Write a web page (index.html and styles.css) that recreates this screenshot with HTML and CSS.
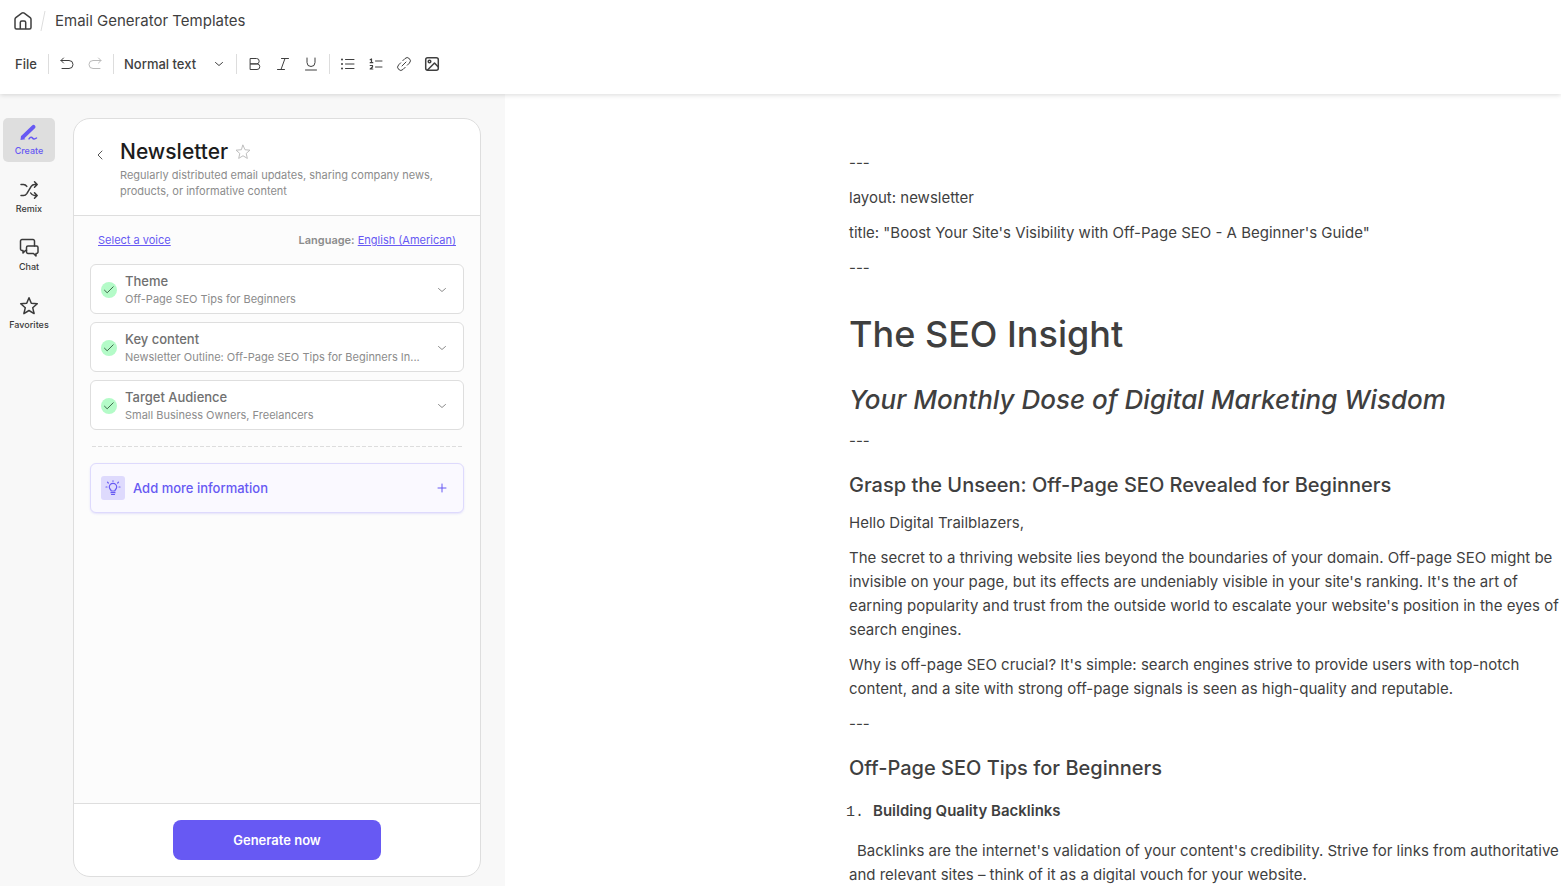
FILE: index.html
```html
<!DOCTYPE html>
<html lang="en">
<head>
    <meta charset="UTF-8">
    <meta name="viewport" content="width=device-width, initial-scale=1.0">
    <title>Email Generator Templates</title>
    <link rel="stylesheet" href="styles.css">
</head>
<body>
    <header class="topbar">
        <div class="breadcrumb">
            <a href="#" class="home" aria-label="Home">
                <svg width="20" height="20" viewBox="0 0 20 20"><path d="M2 8.200a2 2 0 0 1 .8-1.600L8.800 2.200a2 2 0 0 1 2.400 0l6 4.400a2 2 0 0 1 .8 1.600v8.300a1.500 1.500 0 0 1-1.500 1.500h-13A1.500 1.500 0 0 1 2 16.500zM7.300 18v-6.500a1.500 1.500 0 0 1 1.500-1.500h2.400a1.500 1.500 0 0 1 1.500 1.500V18"/></svg>
            </a>
            <svg class="slash" width="6" height="20" viewBox="0 0 6 20"><path d="M5 0 1 20"/></svg>
            <span class="doc-name">Email Generator Templates</span>
        </div>
        <div class="toolbar">
            <button type="button" class="file">File</button>
            <span class="divider"></span>
            <button type="button" class="tool" aria-label="Undo">
                <svg width="16" height="16" viewBox="0 0 16 16"><path d="M4.500 2 2 4.500 4.500 7M2 4.500h8a4 4 0 0 1 0 8H3"/></svg>
            </button>
            <button type="button" class="tool muted" aria-label="Redo">
                <svg width="16" height="16" viewBox="0 0 16 16"><path d="M11.500 2 14 4.500 11.500 7M14 4.500H6a4 4 0 0 0 0 8h7"/></svg>
            </button>
            <span class="divider"></span>
            <div class="style-picker">
                <select aria-label="Text style">
                    <option>Normal text</option>
                    <option>Heading 1</option>
                    <option>Heading 2</option>
                </select>
                <svg width="10" height="10" viewBox="0 0 10 10"><path d="m1.500 3.500 3.500 3 3.500-3"/></svg>
            </div>
            <span class="divider"></span>
            <button type="button" class="tool" aria-label="Bold">
                <svg width="16" height="16" viewBox="0 0 16 16"><path d="M3.500 2.500h6a2.700 2.700 0 0 1 0 5.400h-6zM3.500 7.900h6.500a2.800 2.800 0 0 1 0 5.600H3.500z"/></svg>
            </button>
            <button type="button" class="tool" aria-label="Italic">
                <svg width="16" height="16" viewBox="0 0 16 16"><path d="M6.500 2.500h7M2.500 13.500h7M10 2.500l-4 11"/></svg>
            </button>
            <button type="button" class="tool" aria-label="Underline">
                <svg width="16" height="16" viewBox="0 0 16 16"><path d="M4 2v4.500a4 4 0 0 0 8 0V2M2.500 14h11"/></svg>
            </button>
            <span class="divider"></span>
            <button type="button" class="tool" aria-label="Bulleted list">
                <svg width="16" height="16" viewBox="0 0 16 16"><path d="M5.500 3.500h8.500M5.500 8h8.500M5.500 12.500h8.500"/><path class="dots" d="M2 3.500h.01M2 8h.01M2 12.500h.01"/></svg>
            </button>
            <button type="button" class="tool" aria-label="Numbered list">
                <svg width="16" height="16" viewBox="0 0 16 16"><path d="M7.500 5h6.500M7.500 11h6.500"/><path class="digits" d="M2.200 3.700 3.500 3v3.700M2.200 6.700h2.600M2.200 9.500h2.300v1.500L2.200 13h2.600"/></svg>
            </button>
            <button type="button" class="tool" aria-label="Link">
                <svg width="16" height="16" viewBox="0 0 16 16"><path d="M6.800 4.700 8.900 2.600a3.150 3.150 0 0 1 4.500 4.500L11.300 9.200M9.200 11.300l-2.100 2.100a3.150 3.150 0 0 1-4.500-4.500L4.700 6.800M6 10l4-4"/></svg>
            </button>
            <button type="button" class="tool" aria-label="Image">
                <svg width="16" height="16" viewBox="0 0 16 16"><g class="bold"><rect x="1.700" y="1.700" width="12.600" height="12.600" rx="2"/><circle cx="5.500" cy="5.500" r="1.300"/><path d="m3.500 14 7-7 3.800 4"/></g></svg>
            </button>
        </div>
    </header>

    <div class="workspace">
        <nav class="rail">
            <a href="#" class="rail-item active">
                <svg width="20" height="20" viewBox="0 0 20 20"><path class="pen" d="m4.600 14.400 9.900-9.500"/><path class="nib" d="m1.500 18 .6-4.800 4.300 4z"/><path d="M10 16.800c1.500-2.200 2.800-1.800 3.500-.8s2 1.600 4 0"/></svg>
                <span>Create</span>
            </a>
            <a href="#" class="rail-item">
                <svg width="20" height="20" viewBox="0 0 20 20"><path d="M2 4.500h2.500c1.500 0 2.500.7 3.300 1.900M2 15.500h2.500c1.500 0 2.500-.7 3.300-1.900l4.400-7.200c.8-1.200 1.800-1.900 3.300-1.900H18M11.700 13c.9 1.600 2 2.500 3.800 2.500H18M15.500 1.700l2.700 2.800-2.700 2.800M15.500 12.700l2.700 2.800-2.700 2.800"/></svg>
                <span>Remix</span>
            </a>
            <a href="#" class="rail-item">
                <svg width="20" height="20" viewBox="0 0 20 20"><path d="M7.500 12.500H6.500L4 15v-2.500H3A1.500 1.500 0 0 1 1.500 11V3A1.500 1.500 0 0 1 3 1.500h11A1.500 1.500 0 0 1 15.500 3v5"/><path d="M9 8h8.500A1.500 1.500 0 0 1 19 9.500V14a1.500 1.500 0 0 1-1.500 1.500H17V18l-2.500-2.500H9A1.500 1.500 0 0 1 7.500 14V9.500A1.500 1.500 0 0 1 9 8z"/></svg>
                <span>Chat</span>
            </a>
            <a href="#" class="rail-item">
                <svg width="20" height="20" viewBox="0 0 20 20"><path d="m10 1.800 2.300 5.500 6 .5-4.600 3.900 1.400 5.900L10 14.500l-5.100 3.100 1.400-5.900-4.600-3.900 6-.5z"/></svg>
                <span>Favorites</span>
            </a>
        </nav>

        <aside class="panel">
            <div class="panel-head">
                <button type="button" class="back" aria-label="Back">
                    <svg width="10" height="10" viewBox="0 0 10 10"><path d="M7 1 3 5l4 4"/></svg>
                </button>
                <div>
                    <div class="title-row">
                        <h2>Newsletter</h2>
                        <button type="button" class="fav" aria-label="Add to favorites">
                            <svg width="16" height="16" viewBox="0 0 20 20"><path d="m10 1.500 2.500 5.700 6.200.5-4.700 4.100 1.400 6.200-5.400-3.300L4.600 18 6 11.800 1.300 7.700l6.200-.5z"/></svg>
                        </button>
                    </div>
                    <p>Regularly distributed email updates, sharing company news, products, or informative content</p>
                </div>
            </div>

            <div class="panel-body">
                <div class="options">
                    <a href="#">Select a voice</a>
                    <div><b>Language:</b> <a href="#">English (American)</a></div>
                </div>

                <button type="button" class="field">
                    <svg class="check" width="16" height="16" viewBox="0 0 16 16"><circle cx="8" cy="8" r="8"/><path d="m3.500 8.200 2.700 2.600 6-6"/></svg>
                    <span class="field-text"><span class="field-name">Theme</span><span class="field-value">Off-Page SEO Tips for Beginners</span></span>
                    <svg class="chevron" width="10" height="10" viewBox="0 0 10 10"><path d="m1.500 3.500 3.500 3 3.500-3"/></svg>
                </button>
                <button type="button" class="field">
                    <svg class="check" width="16" height="16" viewBox="0 0 16 16"><circle cx="8" cy="8" r="8"/><path d="m3.500 8.200 2.700 2.600 6-6"/></svg>
                    <span class="field-text"><span class="field-name">Key content</span><span class="field-value">Newsletter Outline: Off-Page SEO Tips for Beginners In...</span></span>
                    <svg class="chevron" width="10" height="10" viewBox="0 0 10 10"><path d="m1.500 3.500 3.500 3 3.500-3"/></svg>
                </button>
                <button type="button" class="field">
                    <svg class="check" width="16" height="16" viewBox="0 0 16 16"><circle cx="8" cy="8" r="8"/><path d="m3.500 8.200 2.700 2.600 6-6"/></svg>
                    <span class="field-text"><span class="field-name">Target Audience</span><span class="field-value">Small Business Owners, Freelancers</span></span>
                    <svg class="chevron" width="10" height="10" viewBox="0 0 10 10"><path d="m1.500 3.500 3.500 3 3.500-3"/></svg>
                </button>

                <svg class="dashes" height="1"><line x1="0" y1="0.500" x2="100%" y2="0.500"/></svg>

                <button type="button" class="field more">
                    <span class="bulb">
                        <svg width="16" height="16" viewBox="0 0 16 16"><path d="M6.200 11c0-1.300-1.900-1.900-1.900-4a3.700 3.700 0 0 1 7.400 0c0 2.100-1.900 2.700-1.900 4zM6 12.700h4M6.500 14.500h3M8 1.300V.8M3.300 3 2.500 2.200M12.700 3l.8-.8M2 7H1M14 7h1"/></svg>
                    </span>
                    <span class="field-text">Add more information</span>
                    <svg class="plus" width="10" height="10" viewBox="0 0 10 10"><path d="M5 1v8M1 5h8"/></svg>
                </button>
            </div>

            <div class="panel-foot">
                <button type="button" class="generate">Generate now</button>
            </div>
        </aside>

        <main class="editor">
            <article class="document">
                <p>---</p>
                <p>layout: newsletter</p>
                <p>title: "Boost Your Site's Visibility with Off-Page SEO - A Beginner's Guide"</p>
                <p>---</p>
                <h1>The SEO Insight</h1>
                <h2><em>Your Monthly Dose of Digital Marketing Wisdom</em></h2>
                <p>---</p>
                <h3>Grasp the Unseen: Off-Page SEO Revealed for Beginners</h3>
                <p>Hello Digital Trailblazers,</p>
                <p>The secret to a thriving website lies beyond the boundaries of your domain. Off-page SEO might be invisible on your page, but its effects are undeniably visible in your site's ranking. It's the art of earning popularity and trust from the outside world to escalate your website's position in the eyes of search engines.</p>
                <p>Why is off-page SEO crucial? It's simple: search engines strive to provide users with top-notch content, and a site with strong off-page signals is seen as high-quality and reputable.</p>
                <p>---</p>
                <h3>Off-Page SEO Tips for Beginners</h3>
                <ol>
                    <li>Building Quality Backlinks</li>
                </ol>
                <p class="indented">Backlinks are the internet's validation of your content's credibility. Strive for links from authoritative and relevant sites – think of it as a digital vouch for your website.</p>
            </article>
        </main>
    </div>
</body>
</html>
```

FILE: styles.css
```css
* {
    box-sizing: border-box;
}
body {
    margin: 0;
    height: 100vh;
    display: flex;
    flex-direction: column;
    overflow: hidden;
    font-family: Inter, "Liberation Sans", sans-serif;
    font-size: 15px;
    color: #3f3f3f;
    background-color: #fff;
}
h1, h2, h3, p {
    margin: 0;
}
button, select {
    font: inherit;
    color: inherit;
    background: none;
    border: none;
    padding: 0;
    cursor: pointer;
}
svg {
    display: block;
    flex: none;
    fill: none;
    stroke: currentColor;
    stroke-linecap: round;
    stroke-linejoin: round;
}
.topbar {
    flex: none;
    height: 94px;
    position: relative;
    background-color: #fff;
    box-shadow: 0 1px 5px rgba(0, 0, 0, 0.15);
}
.breadcrumb {
    display: flex;
    align-items: center;
    height: 41px;
    padding-left: 13px;
}
.home {
    color: #3f3f3f;
    stroke-width: 1.5;
}
.slash {
    margin: 0 9px 0 7px;
    color: #ddd;
}
.doc-name {
    font-size: 15px;
}
.toolbar {
    display: flex;
    align-items: center;
    height: 46px;
    padding-left: 15px;
    font-size: 13px;
    font-weight: 500;
}
.file {
    width: 23px;
    margin-right: 10px;
    text-align: left;
}
.divider {
    width: 1px;
    height: 20px;
    background-color: #ddd;
}
.tool {
    display: flex;
    align-items: center;
    justify-content: center;
    width: 28px;
    height: 28px;
}
.divider + .tool {
    margin-left: 4px;
}
.tool + .divider {
    margin-left: 4px;
}
.muted {
    color: #bbb;
}
.dots {
    stroke-width: 2;
}
.digits {
    stroke-width: 1.2;
}
.bold {
    stroke-width: 1.5;
}
.style-picker {
    display: flex;
    align-items: center;
    width: 122px;
    padding: 0 12px 0 10px;
    color: #3f3f3f;
}
.style-picker select {
    flex: 1;
    appearance: none;
}
.workspace {
    flex: 1;
    min-height: 0;
    display: flex;
    background-color: #f8f8f8;
}
.rail {
    flex: none;
    width: 73px;
    padding: 24px 0 0 3px;
    display: flex;
    flex-direction: column;
    gap: 14px;
}
.rail-item {
    width: 52px;
    height: 44px;
    padding-top: 4px;
    display: flex;
    flex-direction: column;
    align-items: center;
    gap: 2px;
    border-radius: 5px;
    color: #3a3a3a;
    font-size: 9px;
    font-weight: 500;
    line-height: 14px;
    text-decoration: none;
}
.rail-item svg {
    stroke-width: 1.5;
}
.rail-item.active {
    color: #6759f3;
    background-color: #dedede;
}
.rail-item .pen {
    stroke-width: 4;
}
.nib {
    fill: currentColor;
    stroke: none;
}
.panel {
    flex: none;
    width: 408px;
    margin: 24px 24px 9px 0;
    display: flex;
    flex-direction: column;
    border: 1px solid #dedede;
    border-radius: 17px;
    background-color: #fff;
    overflow: hidden;
    color: #8c8c8c;
    font-size: 11px;
}
.panel-head {
    display: flex;
    gap: 15px;
    height: 97px;
    padding: 17px 24px 0 21px;
    border-bottom: 1px solid #dedede;
    line-height: 16px;
}
.back {
    width: 10px;
    height: 38px;
    color: #555;
}
.title-row {
    display: flex;
    align-items: center;
    gap: 7px;
    height: 31px;
}
.title-row h2 {
    color: #1c1c1c;
    font-size: 21px;
    font-weight: 500;
}
.fav {
    color: #bbb;
    stroke-width: 1.2;
}
.panel-body {
    flex: 1;
    min-height: 0;
    display: flex;
    flex-direction: column;
    gap: 8px;
    padding: 16px;
    background-color: #fcfcfc;
}
.options {
    display: flex;
    justify-content: space-between;
    padding: 0 8px;
    height: 24px;
    line-height: 16px;
}
.options b {
    font-weight: 600;
}
.options a {
    color: #6759f3;
}
.field {
    flex: none;
    display: flex;
    align-items: center;
    gap: 8px;
    height: 50px;
    padding: 2px 16px 0 10px;
    border: 1px solid #dedede;
    border-radius: 6px;
    background-color: #fff;
    text-align: left;
}
.check circle {
    fill: #b4fbc8;
    stroke: none;
}
.check path {
    color: #3f6b4c;
}
.field-text {
    flex: 1;
    min-width: 0;
    display: flex;
    flex-direction: column;
}
.field-name {
    color: #707070;
    font-size: 13px;
    font-weight: 500;
    line-height: 18px;
}
.field-value {
    line-height: 18px;
    white-space: nowrap;
}
.dashes {
    width: 100%;
    margin: 8px 0;
    padding: 0 2px;
    color: #ddd;
    stroke-dasharray: 4 2;
    stroke-linecap: butt;
}
.more {
    padding-top: 0;
    border-color: #dedafd;
    background-color: #faf9ff;
    color: #6759f3;
    font-size: 13px;
    font-weight: 500;
    box-shadow: 0 1px 2px rgba(103, 89, 243, 0.15);
}
.bulb {
    display: flex;
    align-items: center;
    justify-content: center;
    width: 24px;
    height: 24px;
    border-radius: 3px;
    background-color: #dedafd;
    stroke-width: 1.2;
}
.panel-foot {
    display: flex;
    justify-content: center;
    padding: 16px;
    border-top: 1px solid #dedede;
}
.generate {
    width: 208px;
    height: 40px;
    border-radius: 8px;
    background-color: #6759f3;
    color: #fff;
    font-size: 13px;
    font-weight: 600;
}
.editor {
    flex: 1;
    min-width: 0;
    padding: 57px 0 0 24px;
    background-color: #fff;
    overflow: hidden;
}
.document {
    max-width: 712px;
    margin-left: auto;
    line-height: 24px;
}
.document p {
    margin-bottom: 11px;
}
.document h1 {
    margin-top: 31px;
    font-size: 36px;
    font-weight: 500;
    line-height: 46px;
}
.document h2 {
    margin: 26px 0 12px;
    font-size: 26px;
    font-weight: 500;
    line-height: 34px;
}
.document h3 {
    margin: 17px 0 11px;
    font-size: 20px;
    font-weight: 500;
    line-height: 30px;
}
.document ol {
    margin: 16px 0;
    padding-left: 24px;
}
.document li {
    font-weight: 600;
}
.document li::marker {
    font-family: "Liberation Mono", monospace;
    font-weight: 400;
}
.document .indented {
    text-indent: 8px;
}
```
